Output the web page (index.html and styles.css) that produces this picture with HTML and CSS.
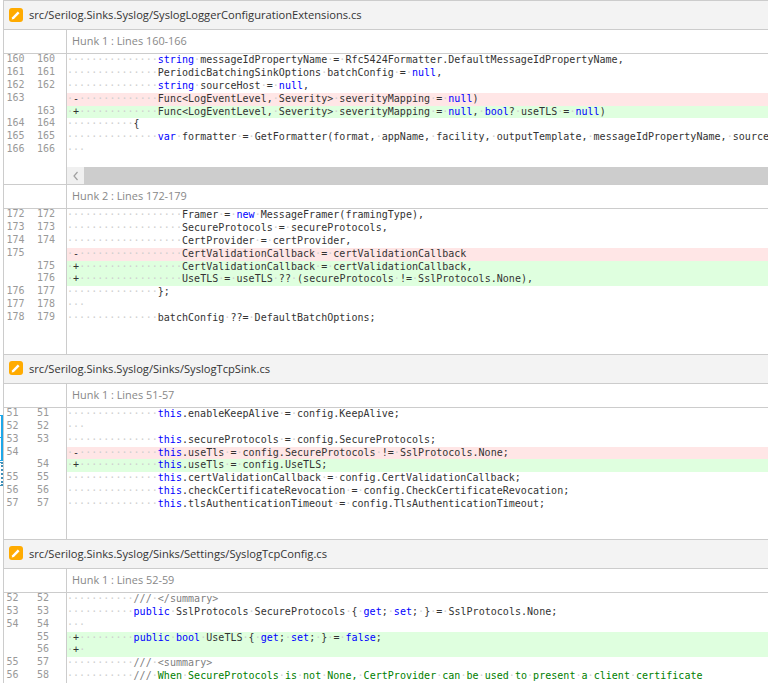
FILE: index.html
```html
<!DOCTYPE html>
<html lang="en">
<head>
  <meta charset="UTF-8" />
  <title>Diff</title>
  <link rel="stylesheet" href="styles.css">
</head>

<body>
  <div class="marker marker-a"></div>
  <div class="marker marker-b"></div>
  <div class="marker marker-c"></div>

  <section class="file">
    <header class="file-head">
      <svg class="file-icon" viewBox="0 0 14 14"><rect width="14" height="14" rx="3" fill="#ffab00"/><path d="M3.2 9.2 8.8 3.6l1.7 1.7-5.6 5.6-2.2.5z" fill="#fff"/></svg>
      <span>src/Serilog.Sinks.Syslog/SyslogLoggerConfigurationExtensions.cs</span>
    </header>

    <div class="hunk-head"><div class="nums"></div><div class="hunk-title">Hunk 1 : Lines 160-166</div></div>
    <div class="row"><div class="nums"><span>160</span><span>160</span></div><div class="code"><span class="w">···············</span><span class="k">string</span><span class="w">·</span>messageIdPropertyName<span class="w">·</span>=<span class="w">·</span>Rfc5424Formatter.DefaultMessageIdPropertyName,</div></div>
    <div class="row"><div class="nums"><span>161</span><span>161</span></div><div class="code"><span class="w">···············</span>PeriodicBatchingSinkOptions<span class="w">·</span>batchConfig<span class="w">·</span>=<span class="w">·</span><span class="k">null</span>,</div></div>
    <div class="row"><div class="nums"><span>162</span><span>162</span></div><div class="code"><span class="w">···············</span><span class="k">string</span><span class="w">·</span>sourceHost<span class="w">·</span>=<span class="w">·</span><span class="k">null</span>,</div></div>
    <div class="row"><div class="nums"><span>163</span><span></span></div><div class="code del"><span class="w">·</span>-<span class="w">·············</span>Func&lt;LogEventLevel,<span class="w">·</span>Severity&gt;<span class="w">·</span>severityMapping<span class="w">·</span>=<span class="w">·</span><span class="k">null</span>)</div></div>
    <div class="row"><div class="nums"><span></span><span>163</span></div><div class="code add"><span class="w">·</span>+<span class="w">·············</span>Func&lt;LogEventLevel,<span class="w">·</span>Severity&gt;<span class="w">·</span>severityMapping<span class="w">·</span>=<span class="w">·</span><span class="k">null</span>,<span class="w">·</span><span class="k">bool</span>?<span class="w">·</span>useTLS<span class="w">·</span>=<span class="w">·</span><span class="k">null</span>)</div></div>
    <div class="row"><div class="nums"><span>164</span><span>164</span></div><div class="code"><span class="w">···········</span>{</div></div>
    <div class="row"><div class="nums"><span>165</span><span>165</span></div><div class="code"><span class="w">···············</span><span class="k">var</span><span class="w">·</span>formatter<span class="w">·</span>=<span class="w">·</span>GetFormatter(format,<span class="w">·</span>appName,<span class="w">·</span>facility,<span class="w">·</span>outputTemplate,<span class="w">·</span>messageIdPropertyName,<span class="w">·</span>source</div></div>
    <div class="row"><div class="nums"><span>166</span><span>166</span></div><div class="code"><span class="w">···</span></div></div>
    <div class="row tail-scroll">
      <div class="nums"></div>
      <div class="scrollbar"><div class="scroll-btn"><svg viewBox="0 0 6 10" width="6" height="10"><path d="M4.5 1 1 5l3.5 4" fill="none" stroke="#a0a0a0" stroke-width="1.2"/></svg></div><div class="scroll-thumb"></div></div>
    </div>

    <div class="hunk-head"><div class="nums"></div><div class="hunk-title">Hunk 2 : Lines 172-179</div></div>
    <div class="row"><div class="nums"><span>172</span><span>172</span></div><div class="code"><span class="w">···················</span>Framer<span class="w">·</span>=<span class="w">·</span><span class="k">new</span><span class="w">·</span>MessageFramer(framingType),</div></div>
    <div class="row"><div class="nums"><span>173</span><span>173</span></div><div class="code"><span class="w">···················</span>SecureProtocols<span class="w">·</span>=<span class="w">·</span>secureProtocols,</div></div>
    <div class="row"><div class="nums"><span>174</span><span>174</span></div><div class="code"><span class="w">···················</span>CertProvider<span class="w">·</span>=<span class="w">·</span>certProvider,</div></div>
    <div class="row"><div class="nums"><span>175</span><span></span></div><div class="code del"><span class="w">·</span>-<span class="w">·················</span>CertValidationCallback<span class="w">·</span>=<span class="w">·</span>certValidationCallback</div></div>
    <div class="row"><div class="nums"><span></span><span>175</span></div><div class="code add"><span class="w">·</span>+<span class="w">·················</span>CertValidationCallback<span class="w">·</span>=<span class="w">·</span>certValidationCallback,</div></div>
    <div class="row"><div class="nums"><span></span><span>176</span></div><div class="code add"><span class="w">·</span>+<span class="w">·················</span>UseTLS<span class="w">·</span>=<span class="w">·</span>useTLS<span class="w">·</span>??<span class="w">·</span>(secureProtocols<span class="w">·</span>!=<span class="w">·</span>SslProtocols.None),</div></div>
    <div class="row"><div class="nums"><span>176</span><span>177</span></div><div class="code"><span class="w">···············</span>};</div></div>
    <div class="row"><div class="nums"><span>177</span><span>178</span></div><div class="code"><span class="w">···</span></div></div>
    <div class="row"><div class="nums"><span>178</span><span>179</span></div><div class="code"><span class="w">···············</span>batchConfig<span class="w">·</span>??=<span class="w">·</span>DefaultBatchOptions;</div></div>
    <div class="row tail-wide"><div class="nums"></div></div>
  </section>

  <section class="file">
    <header class="file-head">
      <svg class="file-icon" viewBox="0 0 14 14"><rect width="14" height="14" rx="3" fill="#ffab00"/><path d="M3.2 9.2 8.8 3.6l1.7 1.7-5.6 5.6-2.2.5z" fill="#fff"/></svg>
      <span>src/Serilog.Sinks.Syslog/Sinks/SyslogTcpSink.cs</span>
    </header>

    <div class="hunk-head"><div class="nums"></div><div class="hunk-title">Hunk 1 : Lines 51-57</div></div>
    <div class="row"><div class="nums"><span>51</span><span>51</span></div><div class="code"><span class="w">···············</span><span class="k">this</span>.enableKeepAlive<span class="w">·</span>=<span class="w">·</span>config.KeepAlive;</div></div>
    <div class="row"><div class="nums"><span>52</span><span>52</span></div><div class="code"><span class="w">···</span></div></div>
    <div class="row"><div class="nums"><span>53</span><span>53</span></div><div class="code"><span class="w">···············</span><span class="k">this</span>.secureProtocols<span class="w">·</span>=<span class="w">·</span>config.SecureProtocols;</div></div>
    <div class="row"><div class="nums"><span>54</span><span></span></div><div class="code del"><span class="w">·</span>-<span class="w">·············</span><span class="k">this</span>.useTls<span class="w">·</span>=<span class="w">·</span>config.SecureProtocols<span class="w">·</span>!=<span class="w">·</span>SslProtocols.None;</div></div>
    <div class="row"><div class="nums"><span></span><span>54</span></div><div class="code add"><span class="w">·</span>+<span class="w">·············</span><span class="k">this</span>.useTls<span class="w">·</span>=<span class="w">·</span>config.UseTLS;</div></div>
    <div class="row"><div class="nums"><span>55</span><span>55</span></div><div class="code"><span class="w">···············</span><span class="k">this</span>.certValidationCallback<span class="w">·</span>=<span class="w">·</span>config.CertValidationCallback;</div></div>
    <div class="row"><div class="nums"><span>56</span><span>56</span></div><div class="code"><span class="w">···············</span><span class="k">this</span>.checkCertificateRevocation<span class="w">·</span>=<span class="w">·</span>config.CheckCertificateRevocation;</div></div>
    <div class="row"><div class="nums"><span>57</span><span>57</span></div><div class="code"><span class="w">···············</span><span class="k">this</span>.tlsAuthenticationTimeout<span class="w">·</span>=<span class="w">·</span>config.TlsAuthenticationTimeout;</div></div>
    <div class="row tail"><div class="nums"></div></div>
  </section>

  <section class="file">
    <header class="file-head">
      <svg class="file-icon" viewBox="0 0 14 14"><rect width="14" height="14" rx="3" fill="#ffab00"/><path d="M3.2 9.2 8.8 3.6l1.7 1.7-5.6 5.6-2.2.5z" fill="#fff"/></svg>
      <span>src/Serilog.Sinks.Syslog/Sinks/Settings/SyslogTcpConfig.cs</span>
    </header>

    <div class="hunk-head"><div class="nums"></div><div class="hunk-title">Hunk 1 : Lines 52-59</div></div>
    <div class="row"><div class="nums"><span>52</span><span>52</span></div><div class="code"><span class="w">···········</span><span class="d">///</span><span class="w">·</span><span class="d">&lt;/summary&gt;</span></div></div>
    <div class="row"><div class="nums"><span>53</span><span>53</span></div><div class="code"><span class="w">···········</span><span class="k">public</span><span class="w">·</span>SslProtocols<span class="w">·</span>SecureProtocols<span class="w">·</span>{<span class="w">·</span><span class="k">get</span>;<span class="w">·</span><span class="k">set</span>;<span class="w">·</span>}<span class="w">·</span>=<span class="w">·</span>SslProtocols.None;</div></div>
    <div class="row"><div class="nums"><span>54</span><span>54</span></div><div class="code"><span class="w">···</span></div></div>
    <div class="row"><div class="nums"><span></span><span>55</span></div><div class="code add"><span class="w">·</span>+<span class="w">·········</span><span class="k">public</span><span class="w">·</span><span class="k">bool</span><span class="w">·</span>UseTLS<span class="w">·</span>{<span class="w">·</span><span class="k">get</span>;<span class="w">·</span><span class="k">set</span>;<span class="w">·</span>}<span class="w">·</span>=<span class="w">·</span><span class="k">false</span>;</div></div>
    <div class="row"><div class="nums"><span></span><span>56</span></div><div class="code add"><span class="w">·</span>+<span class="w">·</span></div></div>
    <div class="row"><div class="nums"><span>55</span><span>57</span></div><div class="code"><span class="w">···········</span><span class="d">///</span><span class="w">·</span><span class="d">&lt;summary&gt;</span></div></div>
    <div class="row"><div class="nums"><span>56</span><span>58</span></div><div class="code"><span class="w">···········</span><span class="d">///</span><span class="w">·</span><span class="c">When</span><span class="w">·</span><span class="c">SecureProtocols</span><span class="w">·</span><span class="c">is</span><span class="w">·</span><span class="c">not</span><span class="w">·</span><span class="c">None,</span><span class="w">·</span><span class="c">CertProvider</span><span class="w">·</span><span class="c">can</span><span class="w">·</span><span class="c">be</span><span class="w">·</span><span class="c">used</span><span class="w">·</span><span class="c">to</span><span class="w">·</span><span class="c">present</span><span class="w">·</span><span class="c">a</span><span class="w">·</span><span class="c">client</span><span class="w">·</span><span class="c">certificate</span></div></div>
  </section>
</body>
</html>
```

FILE: styles.css
```css
* {
  box-sizing: border-box;
}

html,
body {
  height: 683px;
  overflow: hidden;
}

body {
  margin: 0;
  padding-left: 3px;
  position: relative;
  background-color: #fff;
  font-family: "Open Sans", "Noto Sans", sans-serif;
}

/* selection marks in the left margin */
.marker {
  position: absolute;
  left: 0;
  width: 3px;
  border: solid #1ea7e8;
  border-width: 1px 2px 1px 0;
}

.marker-a {
  top: 415px;
  height: 23px;
}

.marker-b {
  top: 437px;
  height: 24px;
}

.marker-c {
  top: 462px;
  height: 24px;
  border-style: dotted;
  border-color: #3f8fb8;
}

.file {
  border-left: 1px solid #ccc;
}

.file-head {
  display: flex;
  align-items: center;
  gap: 6px;
  height: 30px;
  padding-left: 5px;
  padding-bottom: 1px;
  background-color: #f3f3f3;
  border-top: 1px solid #ccc;
  border-bottom: 1px solid #ccc;
  color: #333;
  font-size: 11.15px;
  white-space: nowrap;
}

.file:first-child .file-head {
  height: 29px;
  border-top: none;
}

.file-icon {
  width: 14px;
  height: 14px;
  flex: none;
}

.hunk-head {
  display: flex;
  height: 24px;
  border-bottom: 1px solid #ccc;
}

.hunk-title {
  padding-left: 5px;
  color: #888;
  font-size: 10.9px;
  line-height: 22px;
}

.nums {
  display: flex;
  flex: none;
  width: 63px;
  border-right: 1px solid #ccc;
  line-height: 10px;
}

.nums span {
  width: 30.5px;
  padding-left: 2.5px;
  color: #999;
}

.row {
  display: flex;
  height: 12.875px;
  font-family: "DejaVu Sans Mono", monospace;
  font-size: 10px;
  letter-spacing: 0.03px;
  line-height: 12px;
  white-space: pre;
}

.code {
  flex: 1;
  min-width: 0;
  overflow: hidden;
  color: #333;
}

.del {
  background-color: #ffe6e6;
}

.add {
  background-color: #dfffdf;
}

.w {
  color: #cfcfcf;
}

.k {
  color: #0000ff;
}

.c {
  color: #008000;
}

.d {
  color: #808080;
}

.tail-scroll {
  height: 28px;
  align-items: stretch;
  border-bottom: 1px solid #ccc;
}

.tail {
  height: 28px;
}

.tail-wide {
  height: 29px;
}

.scrollbar {
  display: flex;
  flex: 1;
  margin-top: 10px;
}

.scroll-btn {
  display: flex;
  align-items: center;
  justify-content: center;
  width: 17px;
  background-color: #f0f0f0;
}

.scroll-thumb {
  flex: 1;
  background-color: #cdcdcd;
}
```
